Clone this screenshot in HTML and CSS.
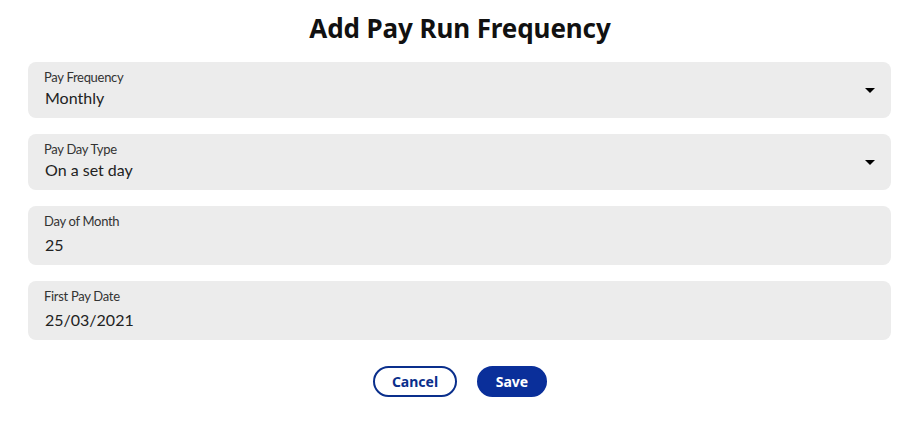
FILE: index.html
```html
<!DOCTYPE html>
<html>
<head>
<meta charset="utf-8">
<link rel="stylesheet" href="styles.css">
</head>
<body>
<div class="dialog">
  <h1 class="title">Add Pay Run Frequency</h1>
  <div class="fields">
    <div class="field select">
      <div class="field-text">
        <span class="label">Pay Frequency</span>
        <span class="value">Monthly</span>
      </div>
      <span class="caret"></span>
    </div>
    <div class="field select">
      <div class="field-text">
        <span class="label">Pay Day Type</span>
        <span class="value">On a set day</span>
      </div>
      <span class="caret"></span>
    </div>
    <div class="field input">
      <div class="field-text">
        <span class="label">Day of Month</span>
        <span class="value">25</span>
      </div>
    </div>
    <div class="field input">
      <div class="field-text">
        <span class="label">First Pay Date</span>
        <span class="value">25/03/2021</span>
      </div>
    </div>
  </div>
  <div class="actions">
    <button class="btn btn-outline">Cancel</button>
    <button class="btn btn-primary">Save</button>
  </div>
</div>
</body>
</html>
```

FILE: styles.css
```css
html, body {
  margin: 0;
  padding: 0;
  background: #ffffff;
}
body {
  font-family: "Lato", "Liberation Sans", sans-serif;
  color: #222;
}
.dialog {
  width: 920px;
  box-sizing: border-box;
  padding: 10px 28px 0 28px;
}
.title {
  margin: 0;
  text-align: center;
  font-family: "Noto Sans", "Open Sans", sans-serif;
  font-weight: 700;
  font-size: 26px;
  line-height: 36px;
  color: #111;
  letter-spacing: -0.1px;
}
.fields {
  margin-top: 16px;
  display: flex;
  flex-direction: column;
  gap: 16px;
  width: 863px;
}
.field {
  background: #ececec;
  border-radius: 8px;
  display: flex;
  align-items: center;
  justify-content: space-between;
  padding: 0 16px 0 16px;
  box-sizing: border-box;
}
.field.select { height: 56px; }
.field.input { height: 59px; }
.field-text {
  display: flex;
  flex-direction: column;
  margin-top: -2px;
}
.label {
  font-size: 13px;
  line-height: 15px;
  color: #333;
  letter-spacing: -0.3px;
}
.value {
  font-size: 16px;
  line-height: 22px;
  color: #222;
  margin-top: 2px;
  margin-left: 1px;
}
.field.input .value { margin-top: 5px; }
.caret {
  width: 0;
  height: 0;
  border-left: 5px solid transparent;
  border-right: 5px solid transparent;
  border-top: 5px solid #000;
  margin-right: 0;
}
.actions {
  display: flex;
  justify-content: center;
  gap: 20px;
  margin-top: 26px;
}
.btn {
  height: 31px;
  border-radius: 16px;
  font-family: "Noto Sans", "Open Sans", sans-serif;
  font-weight: 700;
  font-size: 14px;
  box-sizing: border-box;
  cursor: pointer;
}
.btn-outline {
  width: 84px;
  background: #fff;
  color: #0a2f8c;
  border: 2px solid #0a2f8c;
}
.btn-primary {
  width: 70px;
  background: #0a2f9a;
  color: #fff;
  border: 2px solid #0a2f9a;
}
```
